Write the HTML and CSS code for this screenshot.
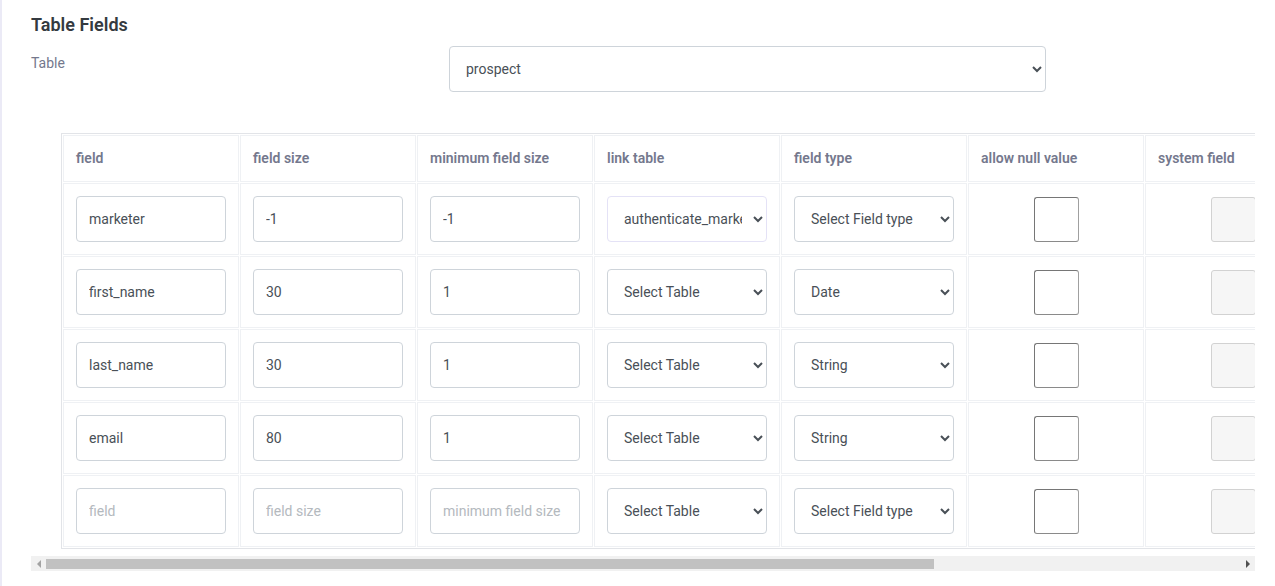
FILE: index.html
```html
<!DOCTYPE html>
<html lang="en">
<head>
<meta charset="utf-8">
<title>Table Fields</title>
<link rel="stylesheet" href="styles.css">
</head>
<body>
<div class="page">
  <h4 class="title">Table Fields</h4>
  <div class="form-row">
    <label class="form-label" for="tbl">Table</label>
    <select id="tbl" class="form-select big">
      <option>prospect</option>
    </select>
  </div>
  <div class="table-wrap">
    <div class="table-scroll">
      <table class="fields">
        <thead>
          <tr>
            <th>field</th>
            <th>field size</th>
            <th>minimum field size</th>
            <th class="wide">link table</th>
            <th class="wide">field type</th>
            <th>allow null value</th>
            <th>system field</th>
            <th>unique field</th>
            <th class="act">action</th>
          </tr>
        </thead>
        <tbody>
          <tr>
            <td><input class="form-control" value="marketer"></td>
            <td><input class="form-control" value="-1"></td>
            <td><input class="form-control" value="-1"></td>
            <td class="wide"><select class="form-select light"><option>authenticate_marketer</option></select></td>
            <td class="wide"><select class="form-select"><option>Select Field type</option></select></td>
            <td class="center"><input type="checkbox" class="check"></td>
            <td class="center"><input type="checkbox" class="check" disabled></td>
            <td class="center"><input type="checkbox" class="check"></td>
            <td class="act"><button class="btn">Delete</button></td>
          </tr>
          <tr>
            <td><input class="form-control" value="first_name"></td>
            <td><input class="form-control" value="30"></td>
            <td><input class="form-control" value="1"></td>
            <td class="wide"><select class="form-select"><option>Select Table</option></select></td>
            <td class="wide"><select class="form-select"><option>Date</option></select></td>
            <td class="center"><input type="checkbox" class="check"></td>
            <td class="center"><input type="checkbox" class="check" disabled></td>
            <td class="center"><input type="checkbox" class="check"></td>
            <td class="act"><button class="btn">Delete</button></td>
          </tr>
          <tr>
            <td><input class="form-control" value="last_name"></td>
            <td><input class="form-control" value="30"></td>
            <td><input class="form-control" value="1"></td>
            <td class="wide"><select class="form-select"><option>Select Table</option></select></td>
            <td class="wide"><select class="form-select"><option>String</option></select></td>
            <td class="center"><input type="checkbox" class="check"></td>
            <td class="center"><input type="checkbox" class="check" disabled></td>
            <td class="center"><input type="checkbox" class="check"></td>
            <td class="act"><button class="btn">Delete</button></td>
          </tr>
          <tr>
            <td><input class="form-control" value="email"></td>
            <td><input class="form-control" value="80"></td>
            <td><input class="form-control" value="1"></td>
            <td class="wide"><select class="form-select"><option>Select Table</option></select></td>
            <td class="wide"><select class="form-select"><option>String</option></select></td>
            <td class="center"><input type="checkbox" class="check"></td>
            <td class="center"><input type="checkbox" class="check" disabled></td>
            <td class="center"><input type="checkbox" class="check"></td>
            <td class="act"><button class="btn">Delete</button></td>
          </tr>
          <tr>
            <td><input class="form-control" placeholder="field"></td>
            <td><input class="form-control" placeholder="field size"></td>
            <td><input class="form-control" placeholder="minimum field size"></td>
            <td class="wide"><select class="form-select"><option>Select Table</option></select></td>
            <td class="wide"><select class="form-select"><option>Select Field type</option></select></td>
            <td class="center"><input type="checkbox" class="check"></td>
            <td class="center"><input type="checkbox" class="check" disabled></td>
            <td class="center"><input type="checkbox" class="check"></td>
            <td class="act"><button class="btn">Add</button></td>
          </tr>
        </tbody>
      </table>
    </div>
    <div class="scrollbar" aria-hidden="true">
      <span class="sb-btn"><span class="arrow-left"></span></span>
      <span class="sb-track"><span class="sb-thumb" style="width: 74.4%"></span></span>
      <span class="sb-btn"><span class="arrow-right"></span></span>
    </div>
  </div>
</div>
</body>
</html>
```

FILE: styles.css
```css
* { box-sizing: border-box; }

html, body {
  margin: 0;
  padding: 0;
  background: #ffffff;
}

body {
  font-family: Roboto, "Liberation Sans", Arial, sans-serif;
  font-size: 14px;
  line-height: 1.5;
  color: #495057;
}

.page {
  border-left: 2px solid #ebeaf6;
  min-height: 586px;
  padding: 14px 20px 0 29px;
}

.title {
  margin: 0 0 10px 0;
  font-size: 18px;
  line-height: 22px;
  font-weight: 600;
  color: #343a40;
}

.form-row {
  display: grid;
  grid-template-columns: 418px 597px;
  align-items: start;
  margin-bottom: 11px;
}

.form-label {
  padding-top: 7px;
  color: #74788d;
  font-size: 14px;
  line-height: 21px;
}

.form-select,
.form-control {
  font-family: Roboto, "Liberation Sans", Arial, sans-serif;
  font-size: 14px;
  color: #495057;
  background-color: #ffffff;
  border: 1px solid #ced4da;
  border-radius: 4px;
  height: 46px;
  margin: 0;
  outline: none;
}

.form-control {
  width: 150px;
  padding: 0 12px;
  display: block;
}

.form-control::placeholder {
  color: #b4b9be;
}

.form-select {
  padding: 0 8px 0 12px;
  display: block;
}

.form-select.big {
  width: 597px;
  height: 46px;
}

.form-select.light {
  border-color: #e4e2f6;
}

.table-wrap {
  width: 1224px;
}

.table-scroll {
  overflow: hidden;
  padding: 30px 30px 7px 30px;
}

.scrollbar {
  display: flex;
  height: 15px;
  background: #f1f1f1;
}

.sb-btn {
  width: 15px;
  height: 15px;
  display: flex;
  align-items: center;
  justify-content: center;
  flex: none;
}

.arrow-left {
  width: 0;
  height: 0;
  border-top: 4px solid transparent;
  border-bottom: 4px solid transparent;
  border-right: 4px solid #a3a3a3;
}

.arrow-right {
  width: 0;
  height: 0;
  border-top: 4px solid transparent;
  border-bottom: 4px solid transparent;
  border-left: 4px solid #505050;
}

.sb-track {
  flex: 1;
  display: flex;
  align-items: center;
}

.sb-thumb {
  display: block;
  height: 10px;
  background: #c1c1c1;
}

.fields {
  border: 1px solid #e2e4e8;
  border-spacing: 1px;
  border-collapse: separate;
}

.fields th,
.fields td {
  border: 1px solid #eff1f4;
  padding: 12px;
  text-align: left;
  vertical-align: middle;
  width: 176px;
  min-width: 176px;
}

.fields th {
  font-weight: 600;
  color: #74788d;
  font-size: 14px;
  line-height: 21px;
  white-space: nowrap;
}

.fields .wide {
  width: 186px;
  min-width: 186px;
}

.fields .wide .form-select {
  width: 160px;
}

.fields .act {
  width: 146px;
  min-width: 146px;
}

.fields td.center {
  text-align: center;
}

.check {
  appearance: none;
  -webkit-appearance: none;
  width: 45px;
  height: 45px;
  margin: 0;
  display: inline-block;
  vertical-align: middle;
  border: 1px solid #767676;
  border-right-color: #a0a0a0;
  border-bottom-color: #8a8a8a;
  border-radius: 3px;
  background: #ffffff;
}

.check:disabled {
  background: #f6f6f6;
  border-color: #d2d2d2;
}

.btn {
  font-family: Roboto, "Liberation Sans", Arial, sans-serif;
  font-size: 14px;
  height: 38px;
  padding: 0 16px;
  border: none;
  border-radius: 4px;
  background: #f46a6a;
  color: #fff;
}
```
